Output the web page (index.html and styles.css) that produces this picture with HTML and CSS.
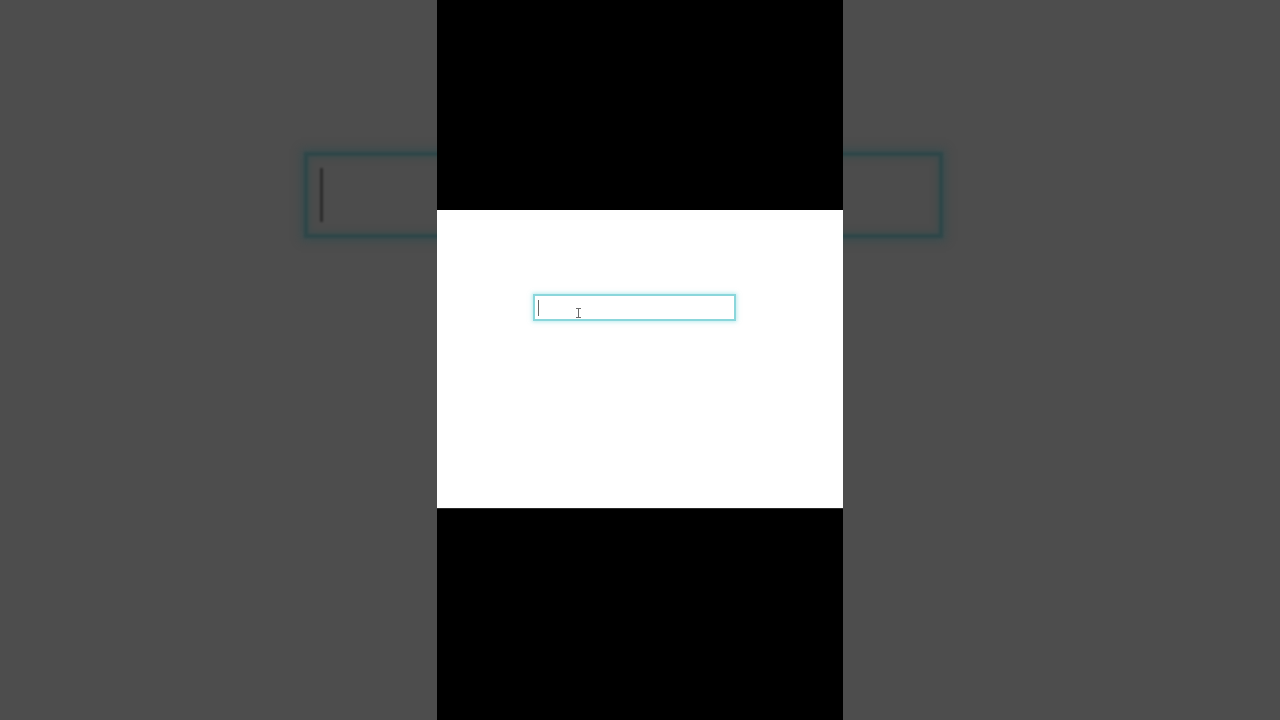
FILE: index.html
```html
<!DOCTYPE html>
<html>
<head>
<meta charset="utf-8">
<link rel="stylesheet" href="styles.css">
</head>
<body>
<div class="backdrop">
  <div class="blur-box"><span class="blur-caret"></span></div>
</div>
<main class="frame">
  <div class="bar"></div>
  <section class="canvas">
    <div class="field"><span class="caret"></span>
      <svg class="ibeam" width="7" height="10" viewBox="0 0 7 10"><path d="M1 0.5H6M3.5 0.5V9.5M1 9.5H6" stroke="#6a6a6a" stroke-width="1" fill="none"/></svg>
    </div>
  </section>
  <div class="bar bottom"></div>
</main>
</body>
</html>
```
FILE: styles.css
```css
html, body {
  margin: 0;
  padding: 0;
  width: 1280px;
  height: 720px;
  overflow: hidden;
  background: #4d4d4d;
  font-family: "Liberation Sans", Arial, sans-serif;
}
.backdrop {
  position: absolute;
  inset: 0;
  background: #4d4d4d;
}
.blur-box {
  position: absolute;
  left: 304px;
  top: 152px;
  width: 631px;
  height: 78px;
  border: 4px solid #2e4648;
  box-shadow: 0 0 8px 3px rgba(45, 75, 78, 0.6), inset 0 0 6px 2px rgba(45, 75, 78, 0.5);
  background: #4c4c4c;
  filter: blur(1px);
}
.blur-caret {
  position: absolute;
  left: 12px;
  top: 12px;
  width: 3px;
  height: 54px;
  background: #2a2a2a;
}
.frame {
  position: relative;
  margin: 0 auto;
  width: 406px;
  height: 720px;
  display: flex;
  flex-direction: column;
}
.bar {
  height: 210px;
  background: #000;
}
.bar.bottom {
  height: 212px;
  border-top: 1px solid #2a2a2a;
  box-sizing: border-box;
}
.canvas {
  height: 298px;
  background: #fff;
  display: flex;
  align-items: flex-start;
  padding: 84px 0 0 96px;
  box-sizing: border-box;
}
.field {
  position: relative;
  width: 199px;
  height: 23px;
  border: 2px solid #8ad6db;
  box-shadow: 0 0 4px 1px rgba(120, 215, 222, 0.5);
  background: #fff;
}
.caret {
  position: absolute;
  left: 3px;
  top: 4px;
  width: 1px;
  height: 16px;
  background: #666;
}
.ibeam {
  position: absolute;
  left: 40px;
  top: 12px;
  display: block;
}
```
